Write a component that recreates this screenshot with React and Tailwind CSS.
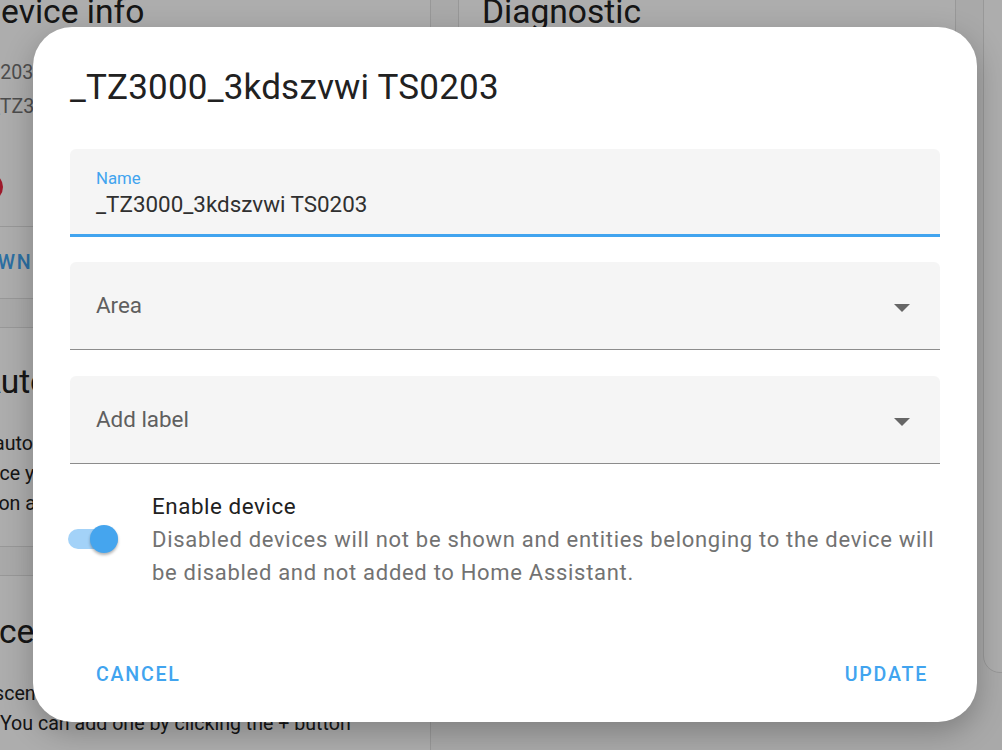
import React from "react";

// Background device page, dimmed by the dialog scrim
const Card = ({ className = "", children }) => (
    <div className={`shrink-0 rounded-[17px] border border-[#e0e0e0] bg-white ${className}`}>{children}</div>
);

const CardHeader = ({ children, pt = "pt-[34px]" }) => (
    <div className={`${pt} pl-[36px] text-[33.6px] leading-[40px] text-[#212121]`}>{children}</div>
);

const BodyLines = ({ lines }) => (
    <div className="mt-[27px] pl-[21px] text-[19.6px] leading-[30px] text-[#212121] whitespace-nowrap">
        {lines.map((line, i) => (
            <div key={i}>{line}</div>
        ))}
    </div>
);

const DevicePage = () => (
    <div className="ml-[-58px] mt-[-30px] flex items-start gap-[27px]">
        {/* left column */}
        <div className="flex w-[489px] shrink-0 flex-col gap-[28px]">
            <Card>
                <CardHeader pt="pt-[21px]">Device info</CardHeader>
                <div className="mt-[24px] pl-[23px] text-[19.6px] leading-[34px] text-[#727272] whitespace-nowrap">
                    <div>TS0203</div>
                    <div>by _TZ3000_3kdszvwi</div>
                </div>
                <div className="ml-[32px] mt-[49px] mb-[25px] h-[28px] w-[28px] rounded-full bg-[#e8253f]" />
                <div className="flex h-[72px] items-center border-t border-[#e0e0e0] pl-[25px] text-[19.6px] font-medium tracking-[1.75px] text-[#41a4ef]">
                    DOWNLOAD DIAGNOSTICS
                </div>
            </Card>
            <Card className="pb-[27px]">
                <CardHeader>Automations</CardHeader>
                <BodyLines
                    lines={[
                        "No automations have been added using this",
                        "device yet. You can add one by clicking the +",
                        "button above.",
                    ]}
                />
            </Card>
            <Card className="h-[260px]">
                <CardHeader pt="pt-[36px]">Scenes</CardHeader>
                <BodyLines
                    lines={[
                        "No scenes have been added using this device",
                        "yet. You can add one by clicking the + button",
                    ]}
                />
            </Card>
        </div>

        {/* right column */}
        <Card className="h-[720px] w-[498px]">
            <div className="pt-[21px] pl-[23px] text-[33.6px] leading-[40px] text-[#212121]">Diagnostic</div>
        </Card>

        <Card className="h-[703px] w-[300px]" />
    </div>
);

const SelectField = ({ label }) => (
    <div className="mt-[26px] flex h-[88px] items-center justify-between rounded-t-[6px] border-b border-[#8c8c8c] bg-[#f5f5f5] pl-[26px] pr-[30px]">
        <span className="text-[22.4px] text-[#5f5f5f]">{label}</span>
        <svg width="16" height="8" viewBox="0 0 16 8" className="mt-[5px]">
            <path d="M0 0 L16 0 L8 8 Z" fill="#666666" />
        </svg>
    </div>
);

const EditDeviceDialog = () => (
    <div className="absolute left-[33px] top-[27px] flex h-[695px] w-[944px] flex-col rounded-[39px] bg-white px-[37px] shadow-[0_10px_30px_rgba(0,0,0,0.25)]">
        <h2 className="pt-[39px] text-[35px] leading-[44px] tracking-[0.2px] text-[#212121]">_TZ3000_3kdszvwi TS0203</h2>

        {/* focused name field */}
        <div className="mt-[39px] h-[88px] rounded-t-[6px] border-b-[3px] border-[#41a4ef] bg-[#f5f5f5] pl-[26px] pt-[19px]">
            <div className="text-[16.8px] leading-[20px] text-[#41a4ef]">Name</div>
            <div className="mt-[2px] text-[22.4px] leading-[28px] text-[#303030]">_TZ3000_3kdszvwi TS0203</div>
        </div>

        <div className="mt-[-1px]">
            <SelectField label="Area" />
        </div>
        <SelectField label="Add label" />

        {/* enable switch */}
        <div className="mt-[26px] flex">
            <div className="relative ml-[-2px] mt-[35px] h-[28px] w-[50px] shrink-0">
                <div className="absolute left-0 top-[4px] h-[20px] w-[50px] rounded-full bg-[#a3d2f8]" />
                <div className="absolute right-0 top-0 h-[28px] w-[28px] rounded-full bg-[#45a5ee] shadow-[0_2px_3px_rgba(0,0,0,0.3)]" />
            </div>
            <div className="ml-[34px]">
                <div className="text-[22.4px] leading-[32px] tracking-[0.55px] text-[#212121]">Enable device</div>
                <p className="mt-[1px] text-[22px] leading-[33px] tracking-[0.7px] text-[#727272]">
                    Disabled devices will not be shown and entities belonging to the device will be disabled and not added to Home Assistant.
                </p>
            </div>
        </div>

        {/* actions */}
        <div className="mt-[68px] flex justify-between pl-[26px] pr-[12px] text-[19.6px] font-medium leading-[36px] tracking-[1.75px] text-[#41a4ef]">
            <button>CANCEL</button>
            <button>UPDATE</button>
        </div>
    </div>
);

export default function App() {
    return (
        <div className="relative h-[750px] w-full overflow-hidden bg-[#fafafa] font-['Roboto','Noto_Sans',sans-serif]">
            <DevicePage />
            <div className="absolute inset-0 bg-[rgba(0,0,0,0.32)]" />
            <EditDeviceDialog />
        </div>
    );
}
